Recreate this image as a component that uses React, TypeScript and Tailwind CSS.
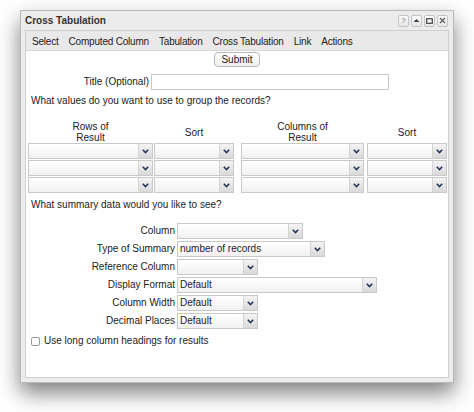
import React from "react";

const Chevron = () => (
  <svg width="7" height="5" viewBox="0 0 7 5">
    <path d="M0.8 0.8 L3.5 3.6 L6.2 0.8" fill="none" stroke="#26365a" strokeWidth="1.6" />
  </svg>
);

function Select({ w, value }: { w: number; value?: string }) {
  return (
    <div
      className="flex h-[16px] shrink-0 border border-[#c9c9c9] bg-gradient-to-b from-white to-[#f1f1f1]"
      style={{ width: w }}
    >
      <div className="flex-1 pl-[2px] text-[10px] leading-[14px] text-[#222] overflow-hidden whitespace-nowrap">{value}</div>
      <div className="flex w-[14px] items-center justify-center border-l border-[#d4d4d4] bg-gradient-to-b from-[#f4f4f4] to-[#d9d9d9]">
        <Chevron />
      </div>
    </div>
  );
}

function TitleBtn({ children }: { children: React.ReactNode }) {
  return (
    <div className="flex h-[12px] w-[11px] items-center justify-center rounded-[2px] border border-[#c4c4c4] bg-gradient-to-b from-[#fcfcfc] to-[#e6e6e6] text-[8px] leading-none text-[#777]">
      {children}
    </div>
  );
}

const FormRow = ({ label, w, value }: { label: string; w: number; value?: string }) => (
  <div className="flex items-center">
    <div className="w-[151px] pr-[2px] text-right text-[10px] leading-[16px] text-[#222]">{label}</div>
    <Select w={w} value={value} />
  </div>
);

export default function App() {
  const grid = [0, 1, 2];
  return (
    <div
      className="h-[412px] w-[474px] bg-white pl-[20px] pt-[10px]"
      style={{ fontFamily: '"Liberation Sans", Arial, sans-serif' }}
    >
      <div className="flex h-[373px] w-[434px] flex-col border border-[#b9b9b9] bg-[#ececec] shadow-[0_10px_20px_rgba(0,0,0,0.5)]">
        <div className="flex h-[19px] items-center justify-between pl-[4px] pr-[5px]">
          <div className="text-[10px] font-bold text-[#333]">Cross Tabulation</div>
          <div className="flex gap-[2px]">
            <TitleBtn>?</TitleBtn>
            <TitleBtn>
              <svg width="7" height="6" viewBox="0 0 7 6">
                <path d="M0.5 4 L3.5 1 L6.5 4 Z" fill="#444" />
              </svg>
            </TitleBtn>
            <TitleBtn>
              <svg width="7" height="6" viewBox="0 0 7 6">
                <rect x="0.7" y="0.7" width="5.6" height="4.6" fill="none" stroke="#444" strokeWidth="1.2" />
              </svg>
            </TitleBtn>
            <TitleBtn>
              <svg width="7" height="7" viewBox="0 0 7 7">
                <path d="M1 1 L6 6 M6 1 L1 6" stroke="#555" strokeWidth="1.1" />
              </svg>
            </TitleBtn>
          </div>
        </div>
        <div className="mx-[4px] mb-[4px] flex flex-1 flex-col border border-[#cfcfcf]">
          <div className="flex h-[20px] items-center gap-[10px] border-b border-[#d6d6d6] bg-[#e9e9e9] pl-[6px] pt-[1px] text-[10px] tracking-[-0.2px] text-[#222]">
            <span>Select</span>
            <span>Computed Column</span>
            <span>Tabulation</span>
            <span>Cross Tabulation</span>
            <span>Link</span>
            <span>Actions</span>
          </div>
          <div className="flex flex-1 flex-col bg-white text-[10px] text-[#222]">
            <div className="flex justify-center pt-[1px]">
              <div className="h-[15px] rounded-[4px] border border-[#b8b8b8] bg-gradient-to-b from-white to-[#f0f0f0] px-[6px] text-[10px] leading-[13px]">
                Submit
              </div>
            </div>
            <div className="mt-[7px] flex items-center">
              <div className="w-[125px] pr-[2px] text-right leading-[16px]">Title (Optional)</div>
              <div className="h-[16px] w-[238px] border border-[#c9c9c9] bg-white" />
            </div>
            <div className="mt-[4px] pl-[5px] leading-[13px]">What values do you want to use to group the records?</div>
            <div className="mt-[14px] flex pl-[2px] leading-[11px]">
              <div className="w-[125px] text-center">Rows of<br />Result</div>
              <div className="ml-[1px] flex w-[80px] items-center justify-center">Sort</div>
              <div className="ml-[7px] w-[123px] text-center">Columns of<br />Result</div>
              <div className="ml-[3px] flex w-[80px] items-center justify-center">Sort</div>
            </div>
            <div className="mt-[0px] flex flex-col gap-[1px] pl-[2px]">
              {grid.map((i) => (
                <div key={i} className="flex">
                  <Select w={125} />
                  <div className="ml-[1px]"><Select w={80} /></div>
                  <div className="ml-[7px]"><Select w={123} /></div>
                  <div className="ml-[3px]"><Select w={80} /></div>
                </div>
              ))}
            </div>
            <div className="mt-[5px] pl-[5px] leading-[13px]">What summary data would you like to see?</div>
            <div className="mt-[12px] flex flex-col gap-[2px]">
              <FormRow label="Column" w={126} />
              <FormRow label="Type of Summary" w={148} value="number of records" />
              <FormRow label="Reference Column" w={81} />
              <FormRow label="Display Format" w={200} value="Default" />
              <FormRow label="Column Width" w={81} value="Default" />
              <FormRow label="Decimal Places" w={81} value="Default" />
            </div>
            <div className="mt-[6px] flex items-center pl-[5px]">
              <div className="h-[9px] w-[9px] rounded-[2px] border border-[#9a9a9a] bg-white" />
              <span className="ml-[4px] leading-[12px]">Use long column headings for results</span>
            </div>
          </div>
        </div>
      </div>
    </div>
  );
}
